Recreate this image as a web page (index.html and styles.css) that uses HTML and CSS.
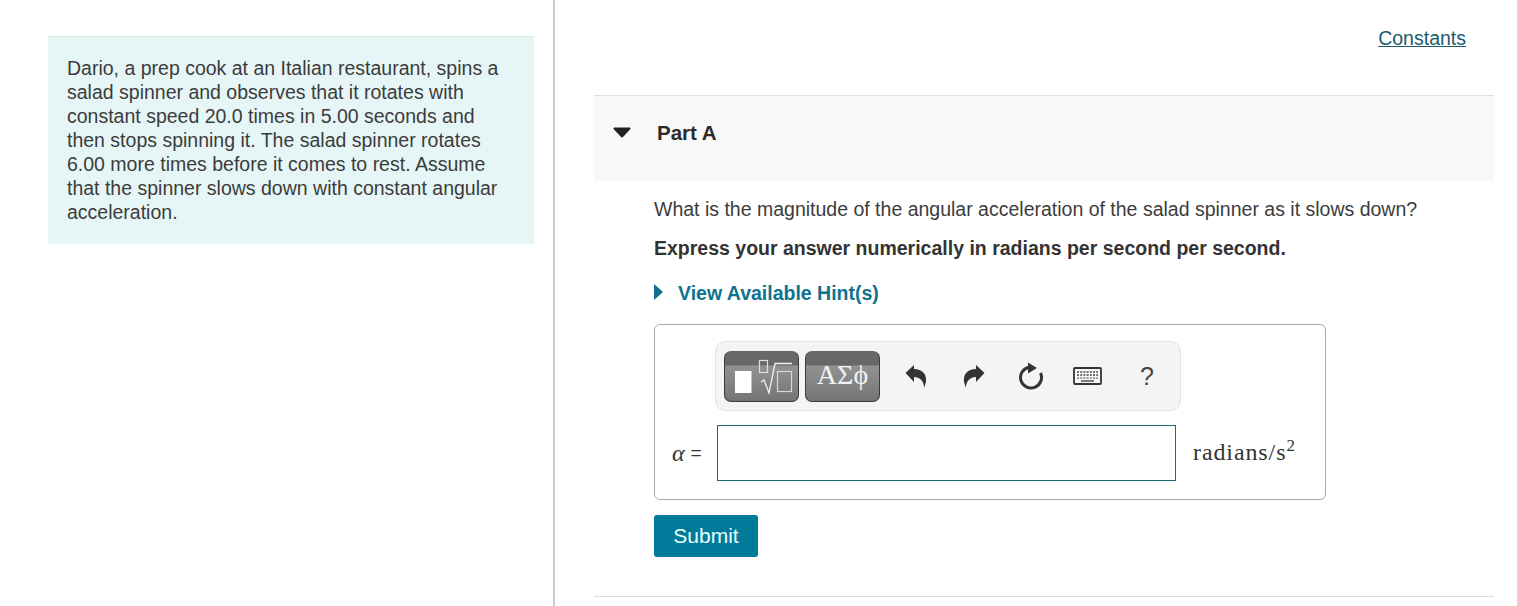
FILE: index.html
```html
<!DOCTYPE html>
<html lang="en">
<head>
    <meta charset="UTF-8">
    <meta name="viewport" content="width=device-width, initial-scale=1.0">
    <title>Part A</title>
    <link rel="stylesheet" href="styles.css">
</head>
<body>
<div class="page">
    <div class="left_col">
        <div class="intro">Dario, a prep cook at an Italian restaurant, spins a salad spinner and observes that it rotates with constant speed 20.0 times in 5.00 seconds and then stops spinning it. The salad spinner rotates 6.00 more times before it comes to rest. Assume that the spinner slows down with constant angular acceleration.</div>
    </div>
    <div class="right_col">
        <div class="constants_row"><a class="constants" href="#">Constants</a></div>
        <div class="part_head">
            <svg class="arrow_down" width="18" height="11" viewBox="0 0 18 11"><path d="M1.5 1.5 H16.5 L9 9.5 Z" fill="#222" stroke="#222" stroke-width="2" stroke-linejoin="round"/></svg>
            <span class="part_title">Part A</span>
        </div>
        <div class="part_body">
            <p class="question">What is the magnitude of the angular acceleration of the salad spinner as it slows down?</p>
            <p class="express">Express your answer numerically in radians per second per second.</p>
            <div class="hint"><span class="arrow_right"></span><a class="hint_link" href="#">View Available Hint(s)</a></div>
            <div class="answer_box">
                <div class="toolbar">
                    <div class="tpl_btn tpl_math">
                        <svg width="73" height="49" viewBox="0 0 73 49">
                            <rect x="10" y="19" width="16.5" height="22" fill="#fff"/>
                            <rect x="34.5" y="8.5" width="8" height="12" fill="none" stroke="#e0e0e0" stroke-width="1.2"/>
                            <path d="M36 30 L39 28 L44 41 L50 11.5 H67" fill="none" stroke="#f2f2f2" stroke-width="1.3"/>
                            <rect x="52.5" y="19.5" width="14" height="20" fill="none" stroke="#d8d8d8" stroke-width="1.2"/>
                        </svg>
                    </div>
                    <div class="tpl_btn tpl_greek">ΑΣϕ</div>
                    <svg class="tool undo" width="23" height="26" viewBox="0 0 23 26"><path d="M0.5 10 L9 2 V6 C17 6 22 11 21 19 L19 25 C19 18 15 14 9 14 V19 Z" fill="#333"/></svg>
                    <svg class="tool redo" width="23" height="26" viewBox="0 0 23 26"><path d="M22.5 10 L14 2 V6 C6 6 1 11 2 19 L4 25 C4 18 8 14 14 14 V19 Z" fill="#333"/></svg>
                    <svg class="tool reset" width="26" height="30" viewBox="0 0 26 30"><path d="M11 6.2 A10.5 10.5 0 1 0 22.5 12" fill="none" stroke="#333" stroke-width="3"/><path d="M10 1.5 L19 7 L10 12.5 Z" fill="#333"/></svg>
                    <svg class="tool keys" width="29" height="18" viewBox="0 0 29 18">
                        <rect x="1" y="1" width="27" height="16" rx="1" fill="#f8f8f8" stroke="#333" stroke-width="1.8"/>
                        <path d="M4 5 H25 M4 8 H25" stroke="#444" stroke-width="1.6" stroke-dasharray="2 1.2"/>
                        <path d="M4 11 H25" stroke="#444" stroke-width="1.2" stroke-dasharray="2 1.2"/>
                        <path d="M8 14 H21" stroke="#444" stroke-width="1.4"/>
                    </svg>
                    <span class="help">?</span>
                </div>
                <div class="input_row">
                    <span class="label"><i class="alpha">α</i><span class="equals">=</span></span>
                    <input class="answer" type="text">
                    <span class="units">radians/s<sup>2</sup></span>
                </div>
            </div>
            <button class="submit" type="button">Submit</button>
        </div>
        <div class="bottom_line"></div>
    </div>
</div>
</body>
</html>
```

FILE: styles.css
```css
html, body {
    margin: 0;
    padding: 0;
    background: #fff;
    overflow: hidden;
}
body {
    font-family: "Liberation Sans", Arial, sans-serif;
    color: #333;
}
.page {
    display: flex;
    height: 606px;
}
.left_col {
    width: 553px;
    border-right: 2px solid #c3ced8;
    padding-top: 36px;
}
.intro {
    width: 486px;
    height: 208px;
    box-sizing: border-box;
    margin-left: 48px;
    padding: 19px 19px 0;
    background: #e6f6f6;
    border-top: 1px solid #d8e8e4;
    font-size: 19.5px;
    line-height: 24px;
    color: #3c3c3c;
}
.right_col {
    width: 900px;
    margin-left: 39px;
}
.constants_row {
    height: 95px;
    box-sizing: border-box;
    padding: 25px 28px 0 0;
    text-align: right;
}
.constants {
    font-size: 19.5px;
    line-height: 26px;
    color: #1c5a6b;
}
.part_head {
    height: 86px;
    box-sizing: border-box;
    display: flex;
    align-items: flex-start;
    padding: 25px 0 0 19px;
    background: #f8f8f8;
    border-top: 1px solid #e2e2e2;
}
.arrow_down {
    flex: none;
    margin-top: 6px;
}
.part_title {
    margin-left: 26px;
    font-size: 20.5px;
    line-height: 24px;
    font-weight: bold;
    color: #2a2a2a;
}
.part_body {
    height: 415px;
    box-sizing: border-box;
    padding: 16px 0 0 60px;
}
.question {
    margin: 0 0 15px;
    font-size: 19.5px;
    line-height: 24px;
    color: #3c3c3c;
}
.express {
    margin: 0 0 20px;
    font-size: 19.5px;
    line-height: 24px;
    font-weight: bold;
}
.hint {
    display: flex;
    align-items: center;
    height: 26px;
    margin-bottom: 18px;
}
.arrow_right {
    width: 0;
    height: 0;
    margin-bottom: 3px;
    border-top: 8px solid transparent;
    border-bottom: 8px solid transparent;
    border-left: 9px solid #0f6f8e;
}
.hint_link {
    margin-left: 15px;
    font-size: 19.5px;
    font-weight: bold;
    color: #0f7390;
    text-decoration: none;
}
.answer_box {
    width: 672px;
    height: 176px;
    box-sizing: border-box;
    border: 1px solid #aaa;
    border-radius: 6px;
    padding: 16px 0 0 17px;
}
.toolbar {
    display: flex;
    align-items: center;
    width: 466px;
    height: 70px;
    box-sizing: border-box;
    margin-left: 43px;
    padding-left: 8px;
    background: #f4f4f4;
    border: 1px solid #e2e2e2;
    border-radius: 10px;
}
.tpl_btn {
    box-sizing: border-box;
    height: 51px;
    border: 1px solid #3a3a3a;
    border-top-color: #666;
    border-radius: 7px;
    background: linear-gradient(#686868 0, #686868 13px, #929293 14px, #747476 100%);
    overflow: hidden;
}
.tpl_math {
    width: 75px;
    margin-right: 6px;
}
.tpl_math svg {
    display: block;
}
.tpl_greek {
    width: 75px;
    padding-top: 6px;
    text-align: center;
    font-family: "Liberation Serif", serif;
    font-size: 28px;
    line-height: 34px;
    color: #f2f2f2;
}
.tool {
    flex: none;
}
.undo {
    margin-left: 25px;
}
.redo {
    margin-left: 34px;
}
.reset {
    margin-left: 33px;
}
.keys {
    margin-left: 29px;
}
.help {
    margin-left: 38px;
    font-size: 25px;
    color: #444;
}
.input_row {
    display: flex;
    align-items: center;
    margin-top: 14px;
}
.label {
    display: flex;
    align-items: center;
    width: 45px;
}
.alpha {
    font-family: "Liberation Serif", serif;
    font-size: 24px;
}
.equals {
    margin-left: 6px;
    font-size: 19px;
}
.answer {
    width: 459px;
    height: 56px;
    box-sizing: border-box;
    border: 1px solid #1d6b78;
    outline: none;
    padding: 0;
    background: #fff;
}
.units {
    margin: 0 0 2px 17px;
    font-family: "Liberation Serif", serif;
    font-size: 24px;
    letter-spacing: 0.9px;
    color: #333;
}
.units sup {
    font-size: 17px;
    line-height: 0;
}
.submit {
    display: block;
    width: 104px;
    height: 42px;
    margin-top: 15px;
    padding: 0;
    border: none;
    border-radius: 3px;
    background: #007c9a;
    color: #eaffff;
    font-family: "Liberation Sans", Arial, sans-serif;
    font-size: 21px;
}
.bottom_line {
    border-top: 1px solid #dcdcdc;
}
```
